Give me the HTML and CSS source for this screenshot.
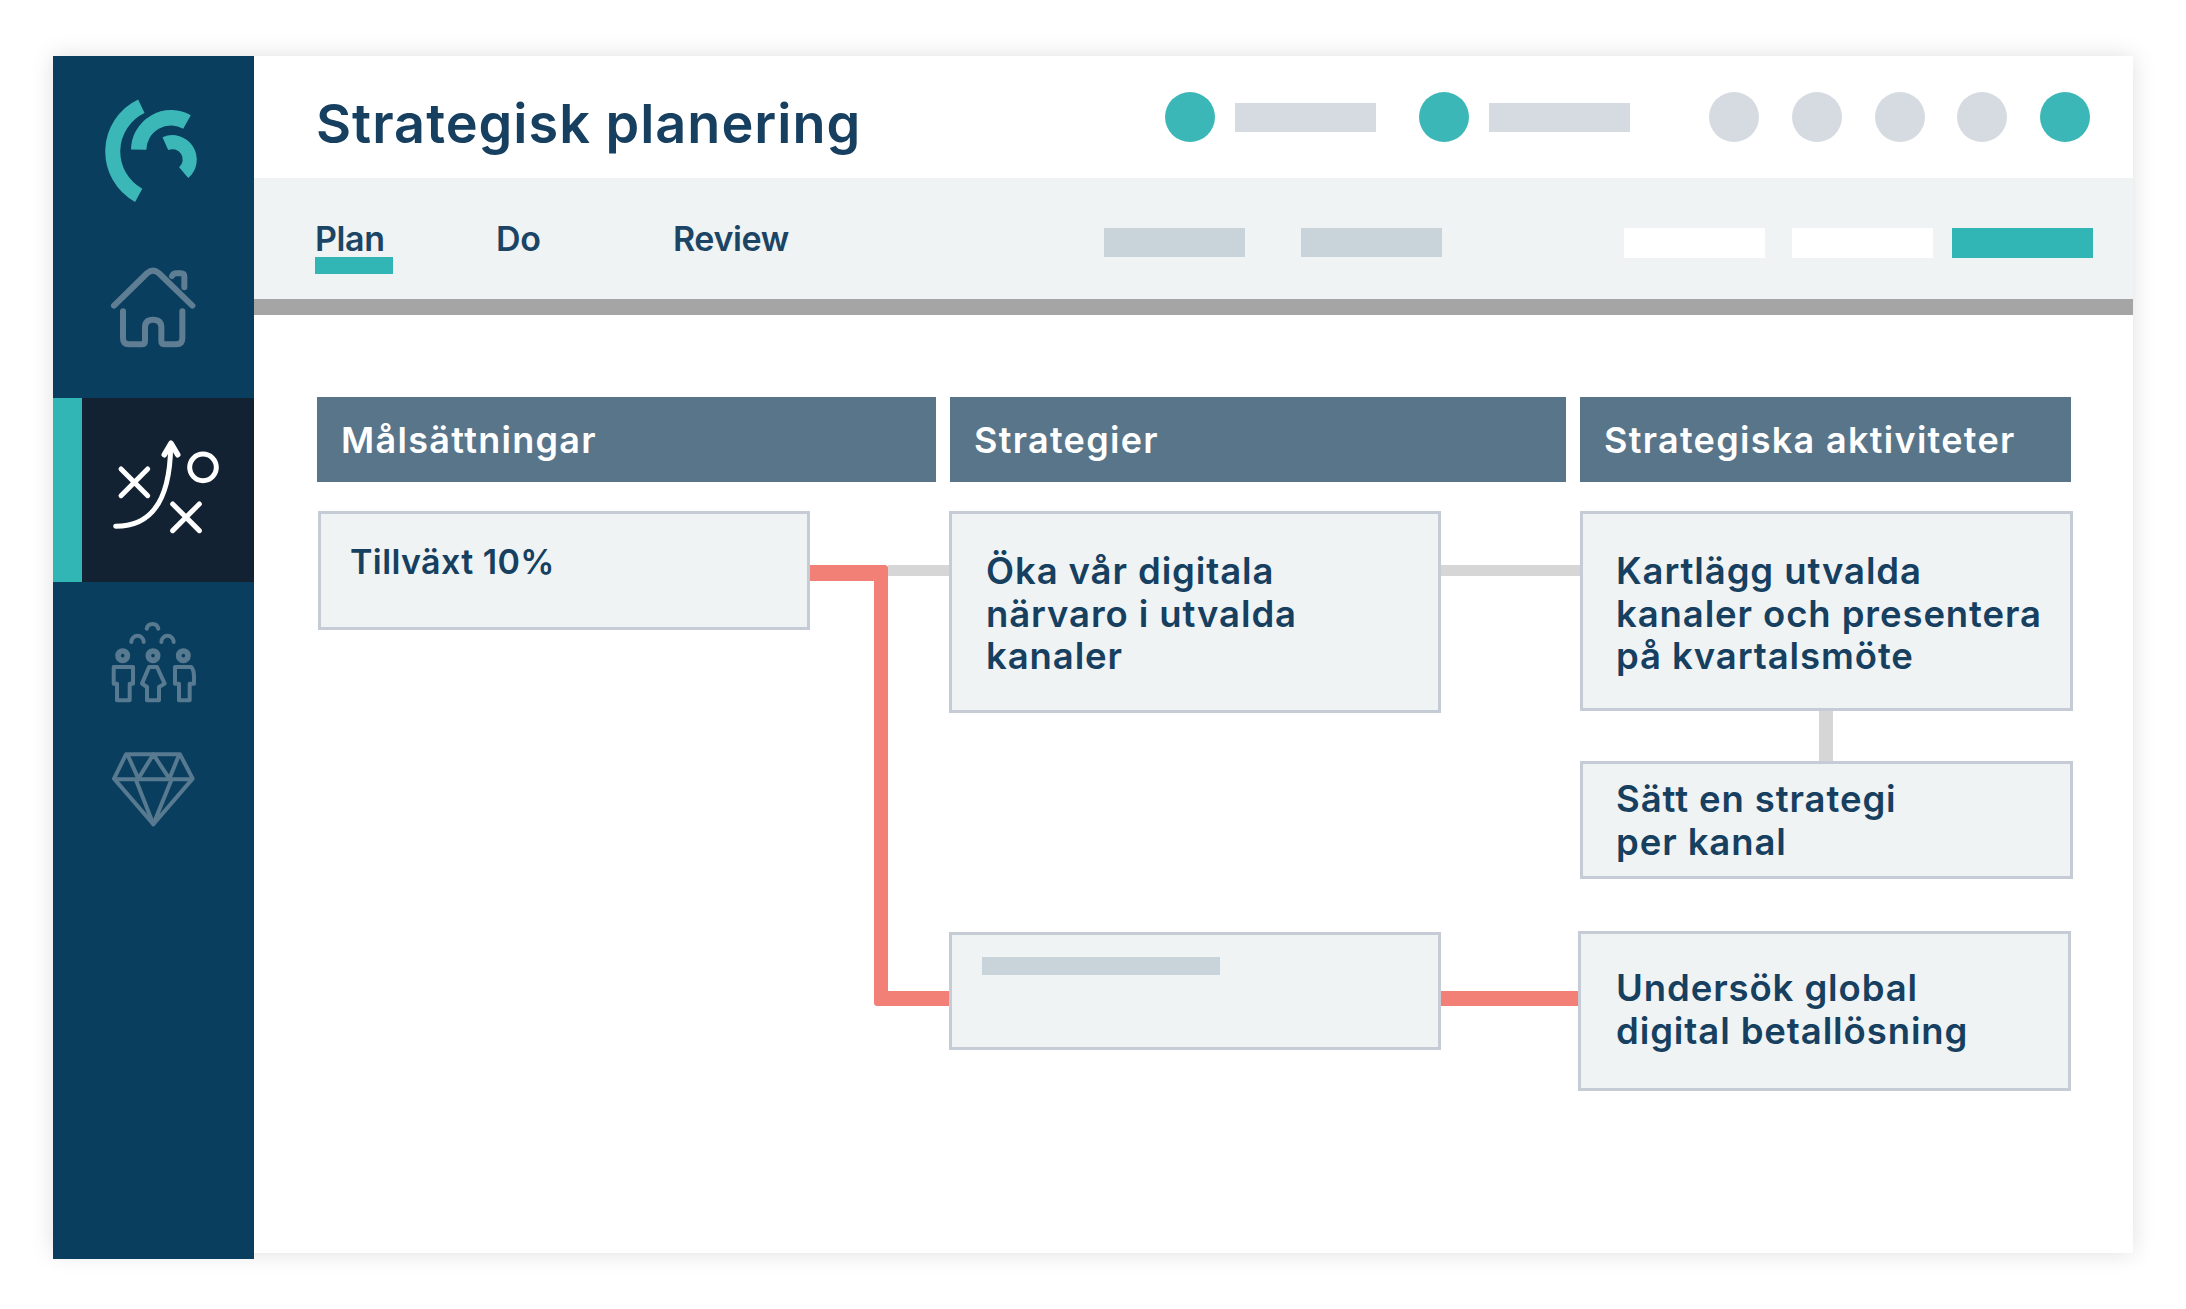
FILE: index.html
```html
<!DOCTYPE html>
<html lang="sv">
<head>
  <meta charset="UTF-8" />
  <title>Strategisk planering</title>
  <link rel="stylesheet" href="styles.css">
</head>
<body>
  <div class="window">
    <aside class="sidebar">
      <svg class="icon-logo" viewBox="190 170 290 320" fill="none" stroke="#3cb7b7">
        <path stroke-width="45" d="M299 198A150 150 0 0 0 291 465"/>
        <path stroke-width="46" d="M291 328A97 97 0 0 1 436 245"/>
        <path stroke-width="42" d="M371 310A52 52 0 0 1 426 397"/>
      </svg>
      <svg class="icon-home" viewBox="200 670 272 260" fill="none" stroke="#5f7d93" stroke-width="18" stroke-linecap="round" stroke-linejoin="round">
        <path d="M218 795L318 697Q335 682 352 697L453 795"/>
        <path d="M392 706Q396 698 405 698H418Q429 698 429 708V740"/>
        <path d="M245 812V893Q245 911 263 911H300Q311 911 311 900V860Q311 837 335 837Q360 837 360 860V900Q360 911 371 911H405Q423 911 423 893V812"/>
      </svg>
      <div class="nav-active">
        <svg class="icon-tactic" viewBox="195 100 380 400" fill="none" stroke="#fff" stroke-width="15" stroke-linecap="round" stroke-linejoin="round">
          <path d="M243 235L323 315M323 235L243 315"/>
          <path d="M398 340L478 420M478 340L398 420"/>
          <circle cx="489" cy="230" r="40"/>
          <path d="M227 407C320 407 390 350 392 165"/>
          <path d="M373 192L393 158L413 192" stroke-width="17"/>
        </svg>
      </div>
      <svg class="icon-people" viewBox="205 680 275 265" fill="none" stroke="#587a90" stroke-width="12" stroke-linejoin="round" stroke-linecap="round">
        <path d="M321 715A18 18 0 0 1 356 715M275 755A18 18 0 0 1 312 755M365 755A18 18 0 0 1 402 755"/>
        <circle cx="249" cy="796" r="14" stroke-width="17"/>
        <circle cx="340" cy="796" r="14" stroke-width="17"/>
        <circle cx="431" cy="796" r="14" stroke-width="17"/>
        <path d="M222 830H280V880H270V930H232V880H222Z"/>
        <path d="M328 830H352L375 880L358 890V930H322V890L307 880Z"/>
        <path d="M406 830H455Q463 840 463 860V880H450V930H418V880H406Z"/>
      </svg>
      <svg class="icon-gem" viewBox="210 1080 260 235" fill="none" stroke="#587a90" stroke-width="12" stroke-linejoin="round">
        <path d="M258 1093H420L458 1166L340 1303L222 1166Z"/>
        <path d="M222 1168H458"/>
        <path d="M262 1093L295 1166L340 1093L388 1166L418 1093"/>
        <path d="M287 1168L340 1303L395 1168"/>
      </svg>
    </aside>

    <main class="main">
      <header class="topbar">
        <h1 class="page-title">Strategisk planering</h1>
        <div class="status">
          <span class="dot dot-teal"></span>
          <span class="stub stub-light"></span>
          <span class="dot dot-teal second"></span>
          <span class="stub stub-light"></span>
        </div>
        <div class="avatars">
          <span class="dot"></span>
          <span class="dot"></span>
          <span class="dot"></span>
          <span class="dot"></span>
          <span class="dot dot-teal"></span>
        </div>
      </header>

      <div class="subbar">
        <nav class="tabs">
          <a class="tab tab-active">Plan</a>
          <a class="tab tab-do">Do</a>
          <a class="tab">Review</a>
        </nav>
        <div class="filters">
          <span class="stub stub-grey"></span>
          <span class="stub stub-grey"></span>
        </div>
        <div class="actions">
          <span class="stub stub-white"></span>
          <span class="stub stub-white"></span>
          <span class="stub stub-teal"></span>
        </div>
      </div>
      <div class="divider"></div>

      <section class="board">
        <span class="link link-grey link-a"></span>
        <span class="link link-grey link-b"></span>
        <span class="link link-grey link-c"></span>
        <span class="link link-red link-d"></span>
        <span class="link link-red link-e"></span>
        <span class="link link-red link-f"></span>
        <span class="link link-red link-g"></span>

        <div class="column">
          <h2 class="column-head">Målsättningar</h2>
          <div class="card card-goal"><p>Tillväxt 10%</p></div>
        </div>

        <div class="column">
          <h2 class="column-head">Strategier</h2>
          <div class="card card-strategy"><p>Öka vår digitala<br>närvaro i utvalda<br>kanaler</p></div>
          <div class="card card-blank"><span class="stub-line"></span></div>
        </div>

        <div class="column">
          <h2 class="column-head">Strategiska aktiviteter</h2>
          <div class="card card-activity"><p>Kartlägg utvalda<br>kanaler och presentera<br>på kvartalsmöte</p></div>
          <div class="card card-channel"><p>Sätt en strategi<br>per kanal</p></div>
          <div class="card card-payment"><p>Undersök global<br>digital betallösning</p></div>
        </div>
      </section>
    </main>
  </div>
</body>
</html>
```

FILE: styles.css
```css
body {
  margin: 0;
  min-height: 1309px;
  padding: 56px 0 0 53px;
  box-sizing: border-box;
  background-color: #fff;
  font-family: Inter, "Noto Sans", sans-serif;
  color: #163f60;
}

.window {
  display: flex;
  align-items: flex-start;
  width: 2080px;
  height: 1197px;
  box-shadow: 0 0 22px rgba(0,0,0,0.13);
}

/* sidebar */
.sidebar {
  flex: none;
  display: flex;
  flex-direction: column;
  align-items: center;
  width: 201px;
  height: 1203px;
  padding-top: 41px;
  box-sizing: border-box;
  background-color: #0a3e5f;
}

.icon-logo { width: 96.7px; height: 106.7px; }
.icon-home { width: 90.7px; height: 86.7px; margin-top: 60px; }

.nav-active {
  display: flex;
  align-items: center;
  justify-content: center;
  align-self: stretch;
  height: 184px;
  margin-top: 48px;
  box-sizing: border-box;
  border-left: 29px solid #32b5b5;
  background-color: #132233;
}

.icon-tactic { width: 126.7px; height: 133.3px; }
.icon-people { width: 91.7px; height: 88.3px; margin-top: 34.7px; }
.icon-gem { width: 86.7px; height: 78.3px; margin-top: 45px; }

/* header */
.main {
  flex: 1;
  min-width: 0;
  height: 100%;
  background-color: #fff;
}

.topbar {
  display: flex;
  align-items: center;
  height: 122px;
  padding: 0 43px 0 62px;
  box-sizing: border-box;
}

.page-title {
  margin: 0;
  padding-top: 12px;
  width: 849px;
  font-size: 54px;
  font-weight: 600;
  letter-spacing: 1px;
  color: #163f60;
}

.status, .avatars {
  display: flex;
  align-items: center;
}

.avatars {
  gap: 32.75px;
  margin-left: 79px;
}

.dot {
  display: block;
  width: 50px;
  height: 50px;
  border-radius: 50%;
  background-color: #d5dbe1;
}

.dot-teal { background-color: #3cb7b7; }
.second { margin-left: 43px; }

.stub {
  display: block;
  width: 141px;
  height: 29px;
}

.stub-light { margin-left: 20px; background-color: #d5dbe1; }
.stub-grey { background-color: #c9d3da; }
.stub-white { height: 30px; background-color: #fff; }
.stub-teal { height: 30px; background-color: #32b5b5; }

/* tabs row */
.subbar {
  display: flex;
  align-items: flex-start;
  height: 121px;
  padding: 0 40px 0 61px;
  box-sizing: border-box;
  background-color: #eff3f4;
}

.tabs {
  display: flex;
  width: 789px;
  margin-top: 40px;
}

.tab {
  position: relative;
  width: 177px;
  font-size: 34px;
  font-weight: 600;
  letter-spacing: -0.4px;
  color: #1c4565;
}

.tab-active { width: 181px; }

.tab-active::after {
  content: "";
  position: absolute;
  left: 0;
  top: 39px;
  width: 78px;
  height: 17px;
  background-color: #32b5b5;
}

.filters, .actions {
  display: flex;
  margin-top: 50px;
}

.filters { gap: 56px; }
.actions { margin-left: 182px; gap: 27px; }
.actions .stub-teal { margin-left: -8px; }

.divider {
  height: 16px;
  background-color: #a5a5a5;
}

/* board */
.board {
  position: relative;
  display: grid;
  grid-template-columns: 619px 616px 491px;
  column-gap: 14px;
  align-items: start;
  padding: 82px 0 0 63px;
}

.column-head {
  margin: 0 0 29px;
  height: 85px;
  padding-left: 24px;
  box-sizing: border-box;
  background-color: #58758a;
  font-size: 36px;
  font-weight: 600;
  line-height: 87px;
  letter-spacing: 1.3px;
  color: #fff;
}

.card {
  position: relative;
  box-sizing: border-box;
  width: 492px;
  border: 3px solid #c5ccd6;
  background-color: #eff3f4;
}

.card p {
  margin: 0;
  font-size: 36.5px;
  font-weight: 600;
  line-height: 42.5px;
  letter-spacing: 0.9px;
  color: #163f60;
}

.card-goal p {
  font-size: 34px;
  letter-spacing: 0.4px;
}

.card-goal { margin-left: 1px; height: 119px; padding: 27px 0 0 29px; }
.card-strategy { margin-left: -1px; height: 202px; padding: 36px 0 0 34px; }
.card-blank { margin: 219px 0 0 -1px; height: 118px; padding: 22px 0 0 30px; }
.card-activity { width: 493px; height: 200px; padding: 36px 0 0 33px; }
.card-channel { width: 493px; height: 118px; margin-top: 50px; padding: 14px 0 0 33px; }
.card-payment { width: 493px; height: 160px; margin: 52px 0 0 -2px; padding: 33px 0 0 35px; }

.stub-line {
  display: block;
  width: 238px;
  height: 18px;
  background-color: #c9d3da;
}

/* connectors between cards */
.link {
  position: absolute;
}

.link-grey { background-color: #d6d6d6; }
.link-red { background-color: #f28077; }

.link-a { left: 634px; top: 250px; width: 61px; height: 11px; }
.link-b { left: 1187px; top: 250px; width: 139px; height: 11px; }
.link-c { left: 1565px; top: 396px; width: 14px; height: 50px; }
.link-d { left: 556px; top: 250px; width: 78px; height: 16px; border-top-right-radius: 4px; }
.link-e { left: 620px; top: 250px; width: 14px; height: 441px; border-top-right-radius: 4px; border-bottom-left-radius: 4px; }
.link-f { left: 620px; top: 676px; width: 75px; height: 15px; border-bottom-left-radius: 4px; }
.link-g { left: 1187px; top: 676px; width: 137px; height: 15px; }
```
